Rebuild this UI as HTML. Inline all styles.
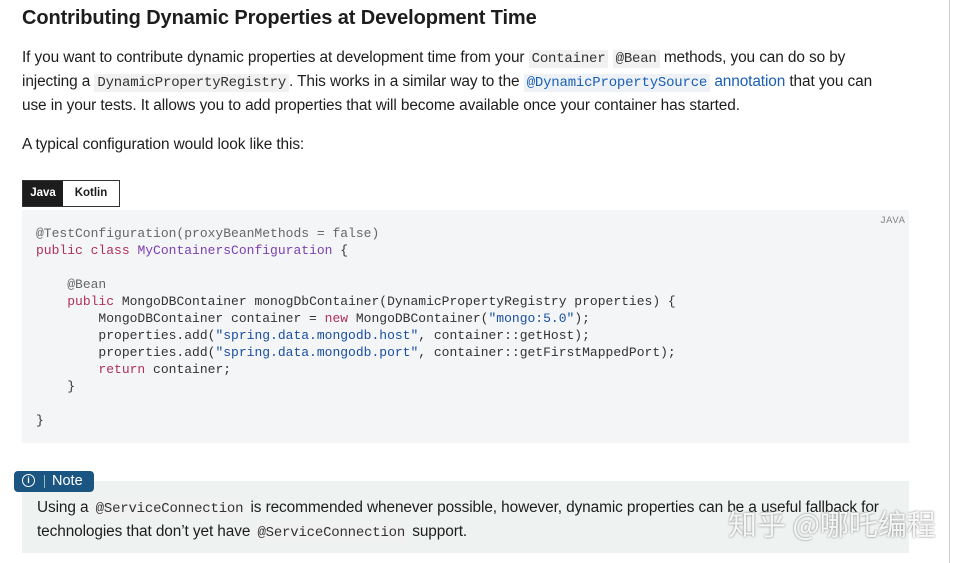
<!DOCTYPE html>
<html><head><meta charset="utf-8"><style>
body{margin:0;width:962px;height:563px;background:#fff;font-family:"Liberation Sans",sans-serif;color:#1d1d1d;position:relative;overflow:hidden}
.a{position:absolute;white-space:nowrap}
h1{position:absolute;left:22px;top:7px;margin:0;font-size:20px;font-weight:bold;letter-spacing:-0.1px}
.p{font-size:15.4px;letter-spacing:-0.1px}
code{font-family:"Liberation Mono",monospace;font-size:14px;background:#f1f1f1;padding:1px 3px;color:#333;letter-spacing:-0.2px}
.lk{color:#1a5fb4}
.code{position:absolute;left:22px;top:210px;width:887px;height:233px;background:#f4f5f7}
pre{position:absolute;left:14px;top:15px;margin:0;font-family:"Liberation Mono",monospace;font-size:13px;line-height:17px;color:#333}
.k{color:#b0305c}.c{color:#7a3fb0}.s{color:#1a4fa0}.g{color:#666}
</style></head><body>
<h1>Contributing Dynamic Properties at Development Time</h1>
<div class="a p" style="left:22px;top:49px">If you want to contribute dynamic properties at development time from your <code>Container</code> <code>@Bean</code> methods, you can do so by</div>
<div class="a p" style="left:22px;top:73px">injecting a <code>DynamicPropertyRegistry</code>. This works in a similar way to the <code class="lk" style="background:#eef2f7">@DynamicPropertySource</code> <span class="lk">annotation</span> that you can</div>
<div class="a p" style="left:22px;top:97px">use in your tests. It allows you to add properties that will become available once your container has started.</div>
<div class="a p" style="left:22px;top:136px">A typical configuration would look like this:</div>
<div class="a" style="left:22px;top:180px;width:98px;height:27px;border:1px solid #333;box-sizing:border-box;font-size:11.5px;font-weight:bold">
<div class="a" style="left:0;top:0;width:40px;height:25px;background:#1d1d1d;color:#fff;text-align:center;line-height:25px">Java</div>
<div class="a" style="left:40px;top:0;width:56px;height:25px;text-align:center;line-height:25px">Kotlin</div></div>
<div class="code"><div class="a" style="right:4px;top:5px;font-family:'Liberation Mono',monospace;font-size:10.5px;color:#888">JAVA</div>
<pre><span class="g">@TestConfiguration(proxyBeanMethods = false)</span>
<span class="k">public class</span> <span class="c">MyContainersConfiguration</span> {

    <span class="g">@Bean</span>
    <span class="k">public</span> MongoDBContainer monogDbContainer(DynamicPropertyRegistry properties) {
        MongoDBContainer container = <span class="k">new</span> MongoDBContainer(<span class="s">"mongo:5.0"</span>);
        properties.add(<span class="s">"spring.data.mongodb.host"</span>, container::getHost);
        properties.add(<span class="s">"spring.data.mongodb.port"</span>, container::getFirstMappedPort);
        <span class="k">return</span> container;
    }

}</pre></div>
<div class="a" style="left:22px;top:481px;width:887px;height:72px;background:#eef2f1"></div>
<div class="a" style="left:14px;top:471px;width:80px;height:21px;background:#1b5582;border-radius:4px;color:#fff;font-size:14.5px;line-height:21px">
<span class="a" style="left:8px;top:3px;width:11px;height:11px;border:1.5px solid #fff;border-radius:50%;font-size:9px;line-height:11px;text-align:center;font-weight:bold">i</span>
<span class="a" style="left:30px;top:4px;width:1px;height:13px;background:#9bb"></span>
<span class="a" style="left:38px;top:0">Note</span></div>
<div class="a p" style="left:37px;top:499px">Using a <code>@ServiceConnection</code> is recommended whenever possible, however, dynamic properties can be a useful fallback for</div>
<div class="a p" style="left:37px;top:523px">technologies that don’t yet have <code>@ServiceConnection</code> support.</div>
<div class="a" style="left:728px;top:502px;font-family:'Noto Sans CJK SC',sans-serif;font-size:29px;color:rgba(255,255,255,0.9);text-shadow:0 0 2px #777">知乎 @哪吒编程</div>
<div class="a" style="left:949px;top:0;width:1px;height:563px;background:#ccc"></div>
</body></html>
